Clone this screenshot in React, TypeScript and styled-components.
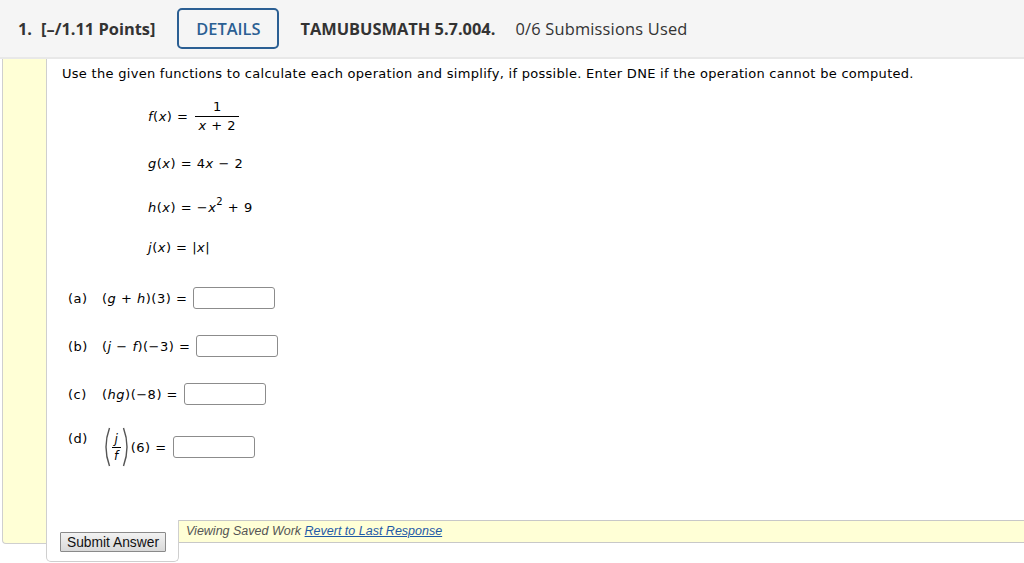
import React from "react";
import styled, { createGlobalStyle } from "styled-components";

const Global = createGlobalStyle`
  html, body { margin: 0; padding: 0; background: #fff; overflow: hidden; }
  body { width: 1024px; height: 563px; }
`;

const Header = styled.div`
  height: 57px;
  background: #f5f5f5;
  border-bottom: 2px solid #e8e8e8;
  display: flex;
  align-items: center;
  font-family: "Open Sans", "Noto Sans", sans-serif;
  font-size: 16.4px;
  color: #333;
  padding-left: 18px;
`;

const Num = styled.span`
  font-weight: 700;
  margin-right: 9px;
`;

const Points = styled.span`
  font-weight: 700;
  margin-right: 22px;
`;

const DetailsBtn = styled.div`
  box-sizing: border-box;
  width: 102px;
  height: 41px;
  border: 2px solid #2b5f93;
  border-radius: 5px;
  color: #2b5f93;
  font-weight: 600;
  display: flex;
  align-items: center;
  justify-content: center;
  margin-right: 21px;
`;

const Code = styled.span`
  font-weight: 700;
  margin-right: 20px;
`;

const Used = styled.span`
  letter-spacing: 0.2px;
`;

const Body = styled.div`
  display: flex;
  padding-left: 2px;
`;

const LeftStrip = styled.div`
  width: 43px;
  height: 484px;
  background: #ffffd6;
  border-left: 1px solid #cfcfcf;
  border-bottom: 1px solid #cfcfcf;
  border-bottom-left-radius: 4px;
  flex: none;
`;

const Main = styled.div`
  flex: 1;
  display: flex;
  flex-direction: column;
`;

const Content = styled.div`
  height: 461px;
  box-sizing: border-box;
  border-left: 1px solid #cfcfcf;
  padding: 6px 0 0 15px;
  display: flex;
  flex-direction: column;
  font-family: "DejaVu Sans", Verdana, sans-serif;
  font-size: 13px;
  color: #000;
`;

const Intro = styled.div`
  height: 18px;
  line-height: 18px;
  letter-spacing: 0.29px;
`;

const Row = styled.div<{ $mt: number; $h: number; $indent: number }>`
  margin-top: ${(p) => p.$mt}px;
  height: ${(p) => p.$h}px;
  margin-left: ${(p) => p.$indent}px;
  display: flex;
  align-items: center;
  white-space: pre;
  letter-spacing: 0.5px;
`;

const I = styled.i`
  font-style: italic;
`;

const Frac = styled.span`
  display: inline-flex;
  flex-direction: column;
  align-items: center;
  margin-left: 7px;
`;

const Numer = styled.span`
  padding: 0 2px 2px;
  line-height: 15px;
`;

const Denom = styled.span`
  border-top: 1px solid #000;
  padding: 1px 3px 0;
  line-height: 15px;
`;

const Sup = styled.span`
  font-size: 10px;
  position: relative;
  top: -6px;
`;

const Label = styled.span<{ $top?: boolean }>`
  width: 34px;
  align-self: ${(p) => (p.$top ? "flex-start" : "center")};
  margin-top: ${(p) => (p.$top ? "4px" : "0")};
`;

const Input = styled.span`
  display: inline-block;
  box-sizing: border-box;
  width: 82px;
  height: 22px;
  border: 1px solid #8c8c8c;
  border-radius: 3px;
  background: #fff;
  margin-left: 6px;
`;

const Paren = styled.svg`
  width: 9px;
  height: 40px;
  flex: none;
`;

const SmallFrac = styled.span`
  display: inline-flex;
  flex-direction: column;
  align-items: center;
  font-size: 12px;
  margin: 0 1px;
`;

const SNum = styled.span`
  line-height: 14px;
  padding: 0 2px 1px;
`;

const SDen = styled.span`
  line-height: 14px;
  border-top: 1px solid #000;
  padding: 1px 2px 0;
`;

const BottomRow = styled.div`
  display: flex;
  align-items: flex-start;
`;

const SubmitTab = styled.div`
  width: 133px;
  height: 42px;
  box-sizing: border-box;
  background: #fff;
  border: 1px solid #cfcfcf;
  border-top: none;
  border-radius: 0 0 5px 5px;
  padding: 12px 0 0 13px;
  flex: none;
`;

const SubmitBtn = styled.button`
  box-sizing: border-box;
  width: 106px;
  height: 20px;
  padding: 0;
  font-family: "Liberation Sans", Arial, sans-serif;
  font-size: 13.8px;
  color: #111;
  background: linear-gradient(#f2f2f2, #d9d9d9);
  border: 1px solid #8a8a8a;
  border-radius: 1px;
`;

const Message = styled.div`
  flex: 1;
  height: 23px;
  box-sizing: border-box;
  background: #ffffd6;
  border-top: 1px solid #c8c8c8;
  border-bottom: 1px solid #c8c8c8;
  font-family: "Liberation Sans", Arial, sans-serif;
  font-size: 12.5px;
  font-style: italic;
  color: #555;
  padding: 3px 0 0 7px;
`;

const Link = styled.a`
  color: #1f5aa6;
  text-decoration: underline;
`;

function BigParen({ right }: { right?: boolean }) {
  return (
    <Paren viewBox="0 0 9 40">
      <path
        d={right ? "M1.5 1 Q8.5 20 1.5 39" : "M7.5 1 Q0.5 20 7.5 39"}
        fill="none"
        stroke="#555"
        strokeWidth="1.4"
      />
    </Paren>
  );
}

export default function App() {
  return (
    <>
      <Global />
      <Header>
        <Num>1.</Num>
        <Points>[–/1.11 Points]</Points>
        <DetailsBtn>DETAILS</DetailsBtn>
        <Code>TAMUBUSMATH 5.7.004.</Code>
        <Used>0/6 Submissions Used</Used>
      </Header>
      <Body>
        <LeftStrip />
        <Main>
          <Content>
            <Intro>
              Use the given functions to calculate each operation and simplify, if possible. Enter DNE if the operation cannot be computed.
            </Intro>
            <Row $mt={16} $h={34} $indent={86}>
              <I>f</I>(<I>x</I>) =
              <Frac>
                <Numer>1</Numer>
                <Denom>
                  <I>x</I> + 2
                </Denom>
              </Frac>
            </Row>
            <Row $mt={21} $h={18} $indent={86}>
              <I>g</I>(<I>x</I>) = 4<I>x</I> − 2
            </Row>
            <Row $mt={26} $h={18} $indent={86}>
              <I>h</I>(<I>x</I>) = −<I>x</I>
              <Sup>2</Sup> + 9
            </Row>
            <Row $mt={22} $h={18} $indent={86}>
              <I>j</I>(<I>x</I>) = |<I>x</I>|
            </Row>
            <Row $mt={30} $h={24} $indent={6}>
              <Label>(a)</Label>(<I>g</I> + <I>h</I>)(3) =<Input />
            </Row>
            <Row $mt={24} $h={24} $indent={6}>
              <Label>(b)</Label>(<I>j</I> − <I>f</I>)(−3) =<Input />
            </Row>
            <Row $mt={24} $h={24} $indent={6}>
              <Label>(c)</Label>(<I>hg</I>)(−8) =<Input />
            </Row>
            <Row $mt={21} $h={40} $indent={6}>
              <Label $top>(d)</Label>
              <BigParen />
              <SmallFrac>
                <SNum>
                  <I>j</I>
                </SNum>
                <SDen>
                  <I>f</I>
                </SDen>
              </SmallFrac>
              <BigParen right />
              (6) =<Input />
            </Row>
          </Content>
          <BottomRow>
            <SubmitTab>
              <SubmitBtn>Submit Answer</SubmitBtn>
            </SubmitTab>
            <Message>
              Viewing Saved Work <Link href="#">Revert to Last Response</Link>
            </Message>
          </BottomRow>
        </Main>
      </Body>
    </>
  );
}
